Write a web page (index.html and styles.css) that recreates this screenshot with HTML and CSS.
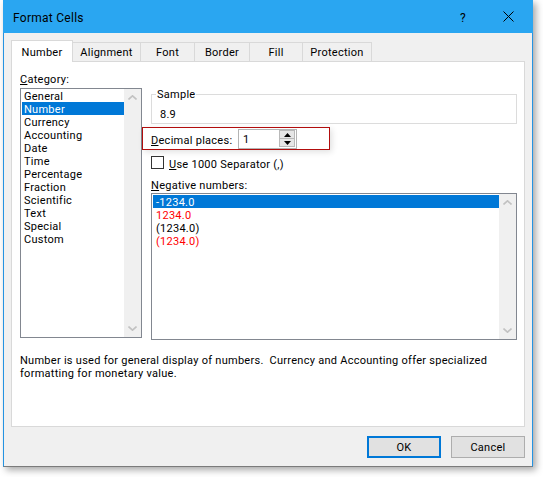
FILE: index.html
```html
<html>
<head>
	<title>Format Cells</title>
	<link rel="stylesheet" href="styles.css">
</head>
<body>
<div class="window">
	<div class="titlebar">
		<span class="title">Format Cells</span>
		<span class="help">?</span>
		<svg class="close" width="11" height="11" viewBox="0 0 11 11">
			<path d="M0.5 0.5 L10.5 10.5 M10.5 0.5 L0.5 10.5" stroke="#000" stroke-width="1" fill="none"/>
		</svg>
	</div>

	<div class="client">
		<div class="tabs">
			<div class="tab active t-number">Number</div>
			<div class="tab t-align">Alignment</div>
			<div class="tab t-font">Font</div>
			<div class="tab t-border">Border</div>
			<div class="tab t-fill">Fill</div>
			<div class="tab t-prot">Protection</div>
		</div>

		<div class="panel">
			<div class="columns">
				<div class="left">
					<div class="label"><u>C</u>ategory:</div>
					<div class="listbox category">
						<div class="items">
							<div class="item">General</div>
							<div class="item selected">Number</div>
							<div class="item">Currency</div>
							<div class="item">Accounting</div>
							<div class="item">Date</div>
							<div class="item">Time</div>
							<div class="item">Percentage</div>
							<div class="item">Fraction</div>
							<div class="item">Scientific</div>
							<div class="item">Text</div>
							<div class="item">Special</div>
							<div class="item">Custom</div>
						</div>
						<div class="scrollbar">
							<div class="arrow">
								<svg width="9" height="5" viewBox="0 0 9 5"><path d="M0.5 4.5 L4.5 0.8 L8.5 4.5" stroke="#c2c2c2" stroke-width="1.6" fill="none"/></svg>
							</div>
							<div class="arrow">
								<svg width="9" height="5" viewBox="0 0 9 5"><path d="M0.5 0.5 L4.5 4.2 L8.5 0.5" stroke="#c2c2c2" stroke-width="1.6" fill="none"/></svg>
							</div>
						</div>
					</div>
				</div>

				<div class="right">
					<fieldset class="sample">
						<legend>Sample</legend>
						<div class="sample-value">8.9</div>
					</fieldset>

					<div class="decimals">
						<span class="dec-label"><u>D</u>ecimal places:</span>
						<div class="spinbox">
							<span class="spin-value">1</span>
							<div class="spin">
								<div class="spin-btn">
									<svg width="7" height="4" viewBox="0 0 7 4"><path d="M0 4 L3.5 0 L7 4 Z" fill="#000"/></svg>
								</div>
								<div class="spin-btn">
									<svg width="7" height="4" viewBox="0 0 7 4"><path d="M0 0 L3.5 4 L7 0 Z" fill="#000"/></svg>
								</div>
							</div>
						</div>
					</div>

					<div class="check">
						<span class="checkbox"></span>
						<span class="check-text"><u>U</u>se 1000 Separator (,)</span>
					</div>

					<div class="label neg-label"><u>N</u>egative numbers:</div>
					<div class="listbox negative">
						<div class="items">
							<div class="item selected">-1234.0</div>
							<div class="item red">1234.0</div>
							<div class="item">(1234.0)</div>
							<div class="item red">(1234.0)</div>
						</div>
						<div class="scrollbar">
							<div class="arrow">
								<svg width="9" height="5" viewBox="0 0 9 5"><path d="M0.5 4.5 L4.5 0.8 L8.5 4.5" stroke="#c2c2c2" stroke-width="1.6" fill="none"/></svg>
							</div>
							<div class="arrow">
								<svg width="9" height="5" viewBox="0 0 9 5"><path d="M0.5 0.5 L4.5 4.2 L8.5 0.5" stroke="#c2c2c2" stroke-width="1.6" fill="none"/></svg>
							</div>
						</div>
					</div>
				</div>
			</div>

			<p class="desc">Number is used for general display of numbers.&nbsp; Currency and Accounting offer specialized<br>formatting for monetary value.</p>
		</div>

		<div class="buttons">
			<div class="btn default">OK</div>
			<div class="btn">Cancel</div>
		</div>
	</div>
</div>
</body>
</html>
```

FILE: styles.css
```css
body, html {
	margin: 0;
	background: #fff;
	font-family: Roboto, "Liberation Sans", sans-serif;
	font-size: 11px;
	letter-spacing: 0.27px;
	color: #000;
}

* { box-sizing: border-box; }

u { text-decoration: underline; text-underline-offset: 1px; }

.window {
	margin-left: 3px;
	width: 530px;
	height: 467px;
	border: 1px solid #2493e2;
	border-top: none;
	border-bottom-color: #7b7b7b;
	background: #f0f0f0;
	box-shadow: 3px 3px 7px rgba(0,0,0,0.35);
}

/* title bar */
.titlebar {
	height: 33px;
	margin: 0 -1px;
	background: #2aa6f1;
	display: flex;
	align-items: center;
	padding: 2px 0 0 10px;
}
.title {
	font-size: 12px;
	flex: 1;
}
.help {
	font-size: 12px;
	margin-right: 37px;
}
.close {
	margin: -2px 19px 0 0;
}

/* client area */
.client {
	padding: 7px 6px 0 7px;
}

.tabs {
	display: flex;
	align-items: flex-end;
	height: 21px;
}
.tab {
	height: 19px;
	border: 1px solid #d9d9d9;
	border-bottom: none;
	margin-left: -1px;
	background: #f0f0f0;
	text-align: center;
	line-height: 20px;
}
.tab.active {
	height: 22px;
	margin-left: 0;
	margin-bottom: -1px;
	background: #fff;
	position: relative;
	z-index: 1;
	line-height: 24px;
}
.t-number { width: 62px; }
.t-align { width: 69px; }
.t-font { width: 55px; }
.t-border { width: 56px; }
.t-fill { width: 54px; }
.t-prot { width: 70px; }

.panel {
	width: 514px;
	height: 366px;
	background: #fff;
	border: 1px solid #d9d9d9;
	padding: 10px 7px 0 8px;
}

.columns {
	display: flex;
	gap: 9px;
}
.left { width: 122px; }
.right { width: 366px; }

.label {
	height: 16px;
	padding-top: 1px;
	line-height: 13px;
}

/* list boxes */
.listbox {
	display: flex;
	border: 1px solid #828790;
	background: #fff;
}
.listbox .items {
	flex: 1;
	padding-left: 1px;
}
.item {
	height: 13px;
	padding: 1px 0 0 2px;
	line-height: 13px;
	white-space: nowrap;
}
.item.selected {
	background: #0078d7;
	color: #fff;
}
.item.red { color: #ff0000; }

.scrollbar {
	width: 17px;
	background: #f0f0f0;
	display: flex;
	flex-direction: column;
	justify-content: space-between;
}
.arrow {
	height: 17px;
	display: flex;
	align-items: center;
	justify-content: center;
}

.category { height: 250px; }

.negative { height: 147px; }
.negative .items { padding-top: 1px; }
.negative .item { padding-left: 3px; }

/* sample group */
.sample {
	margin: 16px 0 0;
	padding: 7px 0 2px 8px;
	border: 1px solid #dcdcdc;
	min-width: 0;
}
.sample legend {
	padding: 1px 1px 0;
	margin-left: -4px;
	line-height: 12px;
}
.sample-value {
	height: 13px;
	line-height: 13px;
}

/* decimal places row */
.decimals {
	display: flex;
	align-items: center;
	margin: 3px 0 0 -9px;
	width: 188px;
	height: 23px;
	border: 1px solid #b20d0d;
	padding-left: 8px;
	box-shadow: 2px 2px 6px rgba(0,0,0,0.12);
}
.dec-label {
	width: 87px;
	padding-top: 3px;
}
.spinbox {
	display: flex;
	align-items: center;
	width: 59px;
	height: 20px;
	border: 1px solid #b4b4b4;
	padding: 1px;
}
.spin-value {
	flex: 1;
	padding: 2px 0 0 3px;
}
.spin {
	width: 16px;
	height: 17px;
	display: flex;
	flex-direction: column;
}
.spin-btn {
	flex: 1;
	background: #e6e6e6;
	border: 1px solid #b9b9b9;
	display: flex;
	align-items: center;
	justify-content: center;
}
.spin-btn + .spin-btn { border-top: none; }

/* checkbox */
.check {
	display: flex;
	align-items: center;
	gap: 5px;
	margin-top: 6px;
	height: 13px;
	line-height: 13px;
}
.check-text { padding-top: 3px; }
.checkbox {
	width: 13px;
	height: 13px;
	border: 1px solid #333;
	background: #fff;
}

.neg-label {
	margin-top: 9px;
	height: 15px;
}

.desc {
	margin: 14px 0 0;
	line-height: 13px;
}

/* buttons */
.buttons {
	display: flex;
	justify-content: flex-end;
	gap: 10px;
	width: 514px;
	margin-top: 9px;
}
.btn {
	width: 74px;
	height: 22px;
	background: #e1e1e1;
	border: 1px solid #adadad;
	text-align: center;
	line-height: 22px;
}
.btn.default {
	border: 2px solid #0078d7;
	line-height: 20px;
}
```
